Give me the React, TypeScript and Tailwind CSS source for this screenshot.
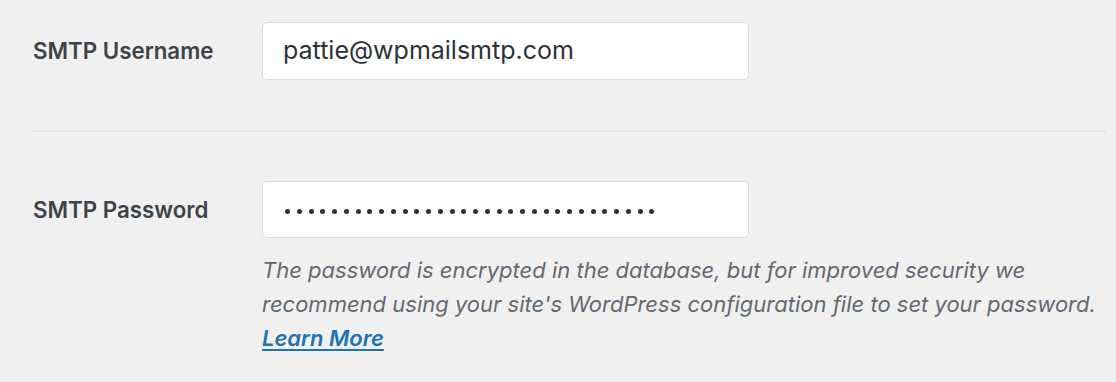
export default function App() {
  const dots = Array.from({ length: 32 }, (_, i) => i);
  return (
    <div
      className="min-h-screen bg-[#f0f0f1] pl-[33px] pr-[10px]"
      style={{ fontFamily: "Inter, 'Noto Sans', sans-serif" }}
    >
      {/* SMTP Username */}
      <div className="flex pt-[22px] pb-[50px]">
        <div className="w-[229px] shrink-0 h-[58px] flex items-center text-[22.3px] font-semibold text-[#3c434a]">
          SMTP Username
        </div>
        <div className="w-[487px] shrink-0 h-[58px] bg-white border border-[#dcdcde] rounded-[5px] flex items-center pl-[20px] text-[25px] text-[#2c3338]">
          pattie@wpmailsmtp.com
        </div>
      </div>

      <div className="h-[2px] bg-[#e4e4e5]" />

      {/* SMTP Password */}
      <div className="flex pt-[49px]">
        <div className="w-[229px] shrink-0 h-[57px] flex items-center text-[22.3px] font-semibold text-[#3c434a]">
          SMTP Password
        </div>
        <div className="flex flex-col">
          <div className="w-[487px] h-[57px] bg-white border border-[#dcdcde] rounded-[5px] flex items-center pl-[22px] pt-[4px] gap-[6.75px]">
            {dots.map((d) => (
              <span key={d} className="block w-[5px] h-[5px] rounded-full bg-[#2c3338]" />
            ))}
          </div>
          <p className="mt-[15px] text-[22px] leading-[34px] italic text-[#646970] whitespace-nowrap">
            The password is encrypted in the database, but for improved security we
            <br />
            recommend using your site's WordPress configuration file to set your password.
            <br />
            <a href="#" className="font-semibold text-[#2271b1] underline underline-offset-[3px]">
              Learn More
            </a>
          </p>
        </div>
      </div>
    </div>
  );
}
